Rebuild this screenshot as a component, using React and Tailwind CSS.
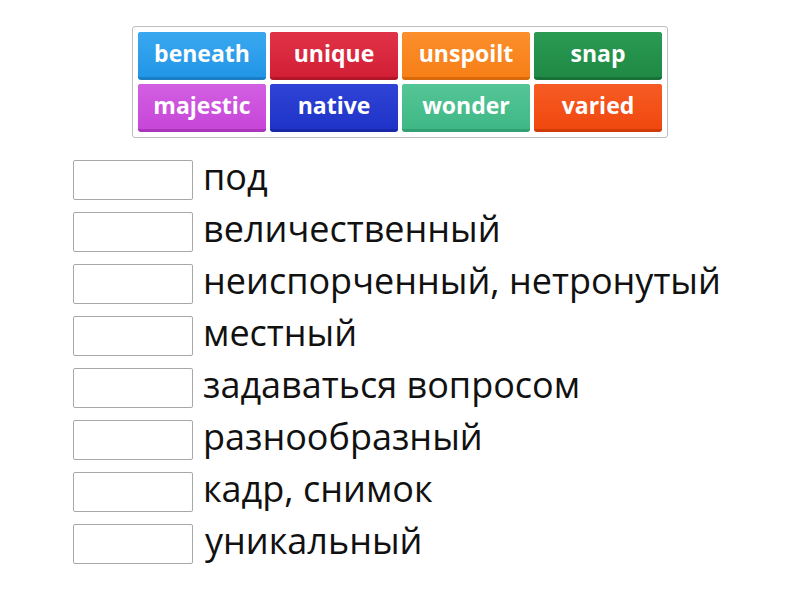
import React from 'react';

const tiles = [
    {word: "beneath", bg: "bg-[#2196e6]", edge: "border-[#1a7fc4]", top: "from-[#3aa8f0]"},
    {word: "unique", bg: "bg-[#d21f35]", edge: "border-[#b0182a]", top: "from-[#e03347]"},
    {word: "unspoilt", bg: "bg-[#f77f17]", edge: "border-[#d96a0c]", top: "from-[#fb8f2c]"},
    {word: "snap", bg: "bg-[#1f8a45]", edge: "border-[#187238]", top: "from-[#2b9a53]"},
    {word: "majestic", bg: "bg-[#c746d8]", edge: "border-[#a935bb]", top: "from-[#d25fe2]"},
    {word: "native", bg: "bg-[#1f33c8]", edge: "border-[#1828a8]", top: "from-[#2f44d6]"},
    {word: "wonder", bg: "bg-[#3fb886]", edge: "border-[#33a073]", top: "from-[#55c596]"},
    {word: "varied", bg: "bg-[#f0480e]", edge: "border-[#cf3a08]", top: "from-[#f65c25]"},
]

const rows = [
    "под",
    "величественный",
    "неиспорченный, нетронутый",
    "местный",
    "задаваться вопросом",
    "разнообразный",
    "кадр, снимок",
    "уникальный",
]

const App = () => {
    return (
        <div className="w-[800px] h-[600px] bg-white font-['Open_Sans',sans-serif]">
            <div className="flex justify-center pt-[26px]">
                <div className="w-[536px] border border-[#bdbdbd] rounded-[3px] p-[5px] grid grid-cols-4 gap-[4px]">
                    {tiles.map((t, i) =>
                        <div key={i}
                             className={`h-[48px] rounded-[3px] border-b-[3px] ${t.edge} ${t.bg} bg-gradient-to-b ${t.top} to-transparent flex items-center justify-center`}>
                            <span className="text-white font-bold text-[23px] leading-none -mt-[3px]">{t.word}</span>
                        </div>
                    )}
                </div>
            </div>
            <div className="flex flex-col gap-[12px] pl-[73px] mt-[22px]">
                {rows.map((x, i) =>
                    <div key={i} className="flex items-center h-[40px]">
                        <div className="w-[120px] h-[40px] border border-[#a8a8a8] rounded-[2px] bg-white shrink-0"></div>
                        <div className={`text-[36px] leading-none text-[#111] whitespace-nowrap ${i === 7 ? 'ml-[12px]' : 'ml-[10px]'} -mt-[6px]`}>{x}</div>
                    </div>
                )}
            </div>
        </div>
    );
};

export default App;
